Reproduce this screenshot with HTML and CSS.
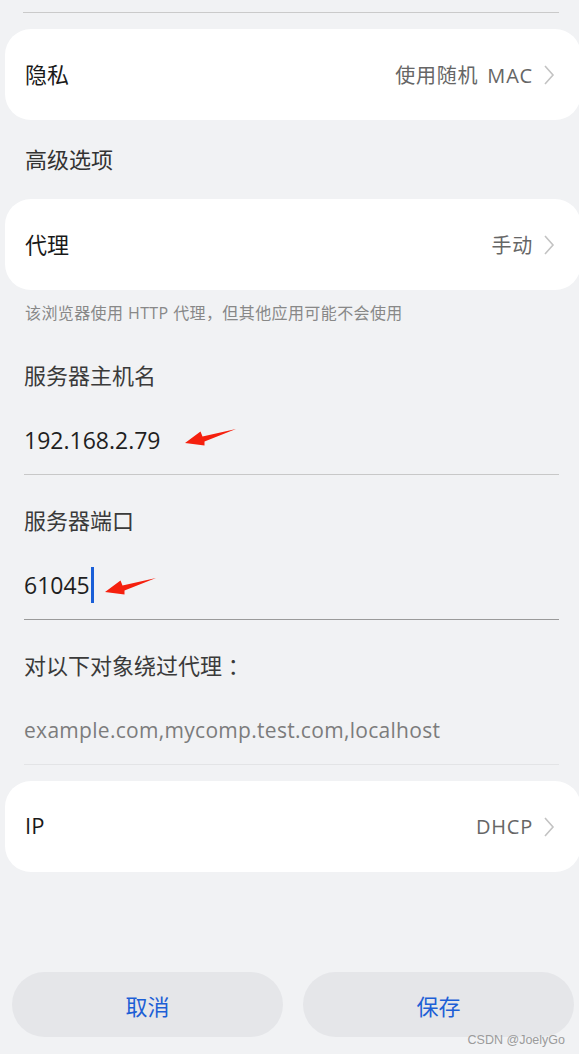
FILE: index.html
```html
<!DOCTYPE html>
<html lang="zh-CN">
<head>
    <meta charset="UTF-8">
    <meta name="viewport" content="width=device-width, initial-scale=1.0">
    <title>代理设置</title>
    <link rel="stylesheet" href="styles.css">
</head>
<body>

<div class="page">
    <div class="top-line"></div>

    <div class="card">
        <span class="card-title">隐私</span>
        <span class="card-value">使用随机 MAC
            <svg class="chevron" viewBox="0 0 12 22"><path d="M2 2 L10 11 L2 20"/></svg>
        </span>
    </div>

    <div class="section-title">高级选项</div>

    <div class="card">
        <span class="card-title">代理</span>
        <span class="card-value">手动
            <svg class="chevron" viewBox="0 0 12 22"><path d="M2 2 L10 11 L2 20"/></svg>
        </span>
    </div>

    <p class="note">该浏览器使用 HTTP 代理，但其他应用可能不会使用</p>

    <div class="field">
        <div class="field-label">服务器主机名</div>
        <div class="field-value">
            <span>192.168.2.79</span>
            <!-- 标注箭头 -->
            <svg class="mark host-mark" viewBox="0 0 54 22"><polygon points="2,16 17.5,4.5 19.5,9.5 53,2 21.5,14.5 21.5,18.5"/></svg>
        </div>
    </div>

    <div class="field">
        <div class="field-label">服务器端口</div>
        <div class="field-value field-active">
            <span>61045</span><span class="caret"></span>
            <svg class="mark port-mark" viewBox="0 0 54 22"><polygon points="2,16 17.5,4.5 19.5,9.5 53,2 21.5,14.5 21.5,18.5"/></svg>
        </div>
    </div>

    <div class="field">
        <div class="field-label">对以下对象绕过代理 ：</div>
        <div class="field-value field-light placeholder">example.com,mycomp.test.com,localhost</div>
    </div>

    <div class="card card-ip">
        <span class="card-title">IP</span>
        <span class="card-value">DHCP
            <svg class="chevron" viewBox="0 0 12 22"><path d="M2 2 L10 11 L2 20"/></svg>
        </span>
    </div>

    <div class="actions">
        <button type="button">取消</button>
        <button type="button">保存</button>
    </div>

    <div class="watermark">CSDN @JoelyGo</div>
</div>

</body>
</html>
```

FILE: styles.css
```css
body {
    margin: 0;
    background-color: #f1f2f4;
    font-family: "Open Sans", "Noto Sans CJK SC", sans-serif;
    color: #1a1a1a;
}
.page {
    position: relative;
    width: 579px;
    height: 1054px;
    overflow: hidden;
}
.top-line {
    height: 12px;
    margin: 0 20px 0 23px;
    border-bottom: 1px solid #cacaca;
}
.card {
    display: flex;
    justify-content: space-between;
    align-items: center;
    height: 91px;
    margin: 16px -2px 0 5px;
    padding: 0 26px 0 20px;
    background-color: white;
    border-radius: 26px;
}
.card-title {
    font-size: 22px;
    color: #191919;
    margin-top: -3px;
}
.card-value {
    display: flex;
    align-items: center;
    gap: 10px;
    font-size: 20px;
    letter-spacing: 0.8px;
    word-spacing: 3px;
    color: #666;
}
.chevron {
    width: 12px;
    height: 22px;
    fill: none;
    stroke: #c3c3c3;
    stroke-width: 1.6;
}
.section-title {
    height: 79px;
    line-height: 78px;
    padding-left: 25px;
    font-size: 22px;
    color: #333;
}
.section-title + .card {
    margin-top: 0;
}
.note {
    margin: 0;
    padding: 13px 0 7px 25px;
    line-height: 20px;
    font-size: 16px;
    letter-spacing: 0.4px;
    color: #888;
}
.field {
    margin: 0 20px 0 24px;
}
.field-label {
    margin-top: 30px;
    line-height: 30px;
    font-size: 22px;
    color: #3a3a3a;
}
.field-value {
    position: relative;
    display: flex;
    align-items: center;
    height: 40px;
    margin-top: 30px;
    padding-bottom: 14px;
    font-size: 23px;
    color: #1f1f1f;
    border-bottom: 1px solid #c8c8c8;
}
.field-active {
    border-bottom-color: #9a9a9a;
}
.field-light {
    border-bottom-color: #e3e4e6;
}
.placeholder {
    font-size: 21px;
    letter-spacing: 0.3px;
    color: #7c7c7c;
}
.caret {
    display: inline-block;
    width: 3px;
    height: 36px;
    margin-left: 1px;
    background-color: #1a5fd8;
}
.mark {
    position: absolute;
    width: 54px;
    height: 22px;
    fill: #f5200e;
}
.host-mark {
    left: 159px;
    top: 7px;
}
.port-mark {
    left: 79px;
    top: 11px;
}
.card-ip {
    margin-top: 16px;
}
.actions {
    display: flex;
    gap: 20px;
    margin-top: 100px;
    padding: 0 5px 0 12px;
}
.actions button {
    flex: 1 1 0;
    height: 65px;
    border: none;
    border-radius: 33px;
    background-color: #e5e6e9;
    color: #1d5fd6;
    font-family: "Noto Sans CJK SC", sans-serif;
    font-size: 22px;
    font-weight: 400;
}
.watermark {
    position: absolute;
    right: 14px;
    bottom: 7px;
    font-family: "Liberation Sans", sans-serif;
    font-size: 12.5px;
    color: #9b9b9b;
}
```
